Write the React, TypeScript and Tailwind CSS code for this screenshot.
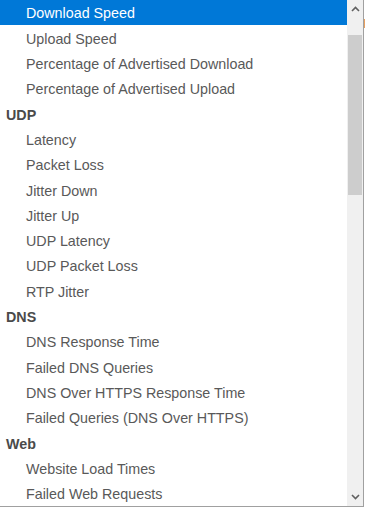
const groups: { title?: string; items: string[] }[] = [
  {
    items: [
      'Download Speed',
      'Upload Speed',
      'Percentage of Advertised Download',
      'Percentage of Advertised Upload',
    ],
  },
  {
    title: 'UDP',
    items: ['Latency', 'Packet Loss', 'Jitter Down', 'Jitter Up', 'UDP Latency', 'UDP Packet Loss', 'RTP Jitter'],
  },
  {
    title: 'DNS',
    items: [
      'DNS Response Time',
      'Failed DNS Queries',
      'DNS Over HTTPS Response Time',
      'Failed Queries (DNS Over HTTPS)',
    ],
  },
  {
    title: 'Web',
    items: ['Website Load Times', 'Failed Web Requests'],
  },
]

const selected = 'Download Speed'

function Chevron({ up }: { up?: boolean }) {
  return (
    <svg width="9" height="6" viewBox="0 0 9 6" className={up ? '' : 'rotate-180'}>
      <path d="M1 5 L4.5 1.5 L8 5" fill="none" stroke="#606060" strokeWidth="1.6" />
    </svg>
  )
}

export default function App() {
  return (
    <div className="relative h-[508px] w-[365px] bg-white" style={{ fontFamily: '"Liberation Sans", Arial, sans-serif' }}>
      <div className="flex h-[507px] w-[364px] border-r border-b border-[#a0a0a0]">
        <ul className="flex-1 overflow-hidden text-[14.3px] leading-none">
          {groups.map((g, gi) => (
            <li key={gi}>
              {g.title && (
                <div className="flex h-[25.3px] items-center pt-[2px] pl-[6px] font-bold text-[#4a4a4a]">{g.title}</div>
              )}
              <ul>
                {g.items.map((it) => (
                  <li
                    key={it}
                    className={
                      it === selected
                        ? 'flex h-[25.3px] items-center bg-[#0078d7] pt-[1px] pl-[26px] text-white'
                        : 'flex h-[25.3px] items-center pt-[2px] pl-[26px] text-[#595959]'
                    }
                  >
                    {it}
                  </li>
                ))}
              </ul>
            </li>
          ))}
        </ul>
        <div className="flex w-[16px] flex-col bg-[#f0f0f0]">
          <div className="flex h-[18px] items-center justify-center">
            <Chevron up />
          </div>
          <div className="mx-[1px] mt-[17px] h-[160px] bg-[#cdcdcd]" />
          <div className="flex-1" />
          <div className="flex h-[18px] items-center justify-center">
            <Chevron />
          </div>
        </div>
      </div>
      <div className="absolute top-[19px] right-0 h-[9px] w-[1px] bg-[#e8a060]" />
    </div>
  )
}
